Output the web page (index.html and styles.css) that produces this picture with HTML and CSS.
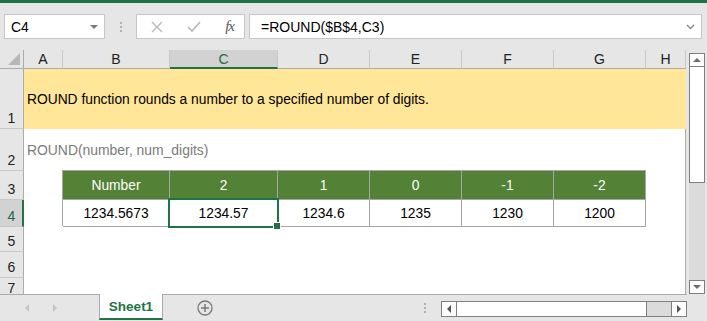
FILE: index.html
```html
<!DOCTYPE html>
<html lang="en">
<head>
    <meta charset="UTF-8">
    <title>ROUND function</title>
    <link rel="stylesheet" href="styles.css">
</head>
<body>
    <div class="app-edge"></div>

    <div class="formula-bar">
        <div class="name-box">
            <span>C4</span>
            <span class="caret-down"></span>
        </div>
        <div class="grip"><i></i><i></i><i></i></div>
        <div class="fx-box">
            <svg width="12" height="12" viewBox="0 0 12 12"><path d="M1 1 L11 11 M11 1 L1 11" stroke="#b8b8b8" stroke-width="1.4" fill="none"/></svg>
            <svg width="14" height="12" viewBox="0 0 14 12"><path d="M1 6 L5 10 L13 1" stroke="#b8b8b8" stroke-width="1.6" fill="none"/></svg>
            <span class="fx">fx</span>
        </div>
        <div class="formula-input">
            <span>=ROUND($B$4,C3)</span>
            <svg width="9" height="6" viewBox="0 0 9 6"><path d="M1 1 L4.5 4.5 L8 1" stroke="#8a8a8a" stroke-width="1.4" fill="none"/></svg>
        </div>
    </div>

    <div class="workspace">
        <div class="sheet">
            <!-- column headers -->
            <div class="corner"><span class="corner-tri"></span></div>
            <div class="col-head">A</div>
            <div class="col-head">B</div>
            <div class="col-head selected">C</div>
            <div class="col-head">D</div>
            <div class="col-head">E</div>
            <div class="col-head">F</div>
            <div class="col-head">G</div>
            <div class="col-head">H</div>

            <!-- row 1 -->
            <div class="row-head">1</div>
            <div class="banner">ROUND function rounds a number to a specified number of digits.</div>

            <!-- row 2 -->
            <div class="row-head">2</div>
            <div class="syntax">ROUND(number, num_digits)</div>

            <!-- rows 3-4 -->
            <div class="row-head">3</div>
            <div class="row-head selected r4">4</div>
            <div class="blank-a"></div>
            <div class="blank-h"></div>
            <div class="data-table">
                <div class="th">Number</div>
                <div class="th">2</div>
                <div class="th">1</div>
                <div class="th">0</div>
                <div class="th">-1</div>
                <div class="th">-2</div>
                <div class="td">1234.5673</div>
                <div class="td active">1234.57</div>
                <div class="td">1234.6</div>
                <div class="td">1235</div>
                <div class="td">1230</div>
                <div class="td">1200</div>
            </div>

            <!-- rows 5-7 -->
            <div class="row-head">5</div>
            <div class="row-head">6</div>
            <div class="row-head cut">7</div>
            <div class="blank-rest"></div>
        </div>

        <div class="vscroll">
            <div class="sb-btn"><span class="tri-up"></span></div>
            <div class="sb-thumb-v"></div>
            <div class="sb-track-v"></div>
            <div class="sb-btn"><span class="tri-down"></span></div>
        </div>
    </div>

    <div class="tab-bar">
        <div class="tab-nav">
            <span class="tri-left"></span>
            <span class="tri-right"></span>
        </div>
        <div class="sheet-tab">Sheet1</div>
        <div class="add-sheet">
            <svg width="16" height="16" viewBox="0 0 16 16">
                <circle cx="8" cy="8" r="7" stroke="#7a7a7a" stroke-width="1.3" fill="none"/>
                <path d="M8 4 V12 M4 8 H12" stroke="#7a7a7a" stroke-width="1.5"/>
            </svg>
        </div>
        <div class="tab-spacer"></div>
        <div class="grip h-grip"><i></i><i></i><i></i></div>
        <div class="hscroll">
            <div class="sb-btn-h"><span class="tri-left dark"></span></div>
            <div class="sb-thumb-h"></div>
            <div class="sb-track-h"></div>
            <div class="sb-btn-h"><span class="tri-right dark"></span></div>
        </div>
    </div>
</body>
</html>
```

FILE: styles.css
```css
/* Base */
* {
    margin: 0;
    padding: 0;
    box-sizing: border-box;
}

body {
    width: 707px;
    height: 321px;
    overflow: hidden;
    font-family: "Liberation Sans", Arial, sans-serif;
    font-size: 13px;
    color: #000;
    background-color: #e6e6e6;
}

.app-edge {
    height: 3px;
    background-color: #217346;
}

/* Formula bar */
.formula-bar {
    display: flex;
    height: 47px;
    padding: 11px 5px 0 4px;
}

.name-box,
.fx-box,
.formula-input {
    height: 25px;
    background-color: #fff;
    border: 1px solid #c6c6c6;
    display: flex;
    align-items: center;
}

.name-box {
    width: 101px;
    padding: 0 6px;
    justify-content: space-between;
    font-size: 14px;
}

.caret-down {
    width: 0;
    height: 0;
    border-left: 4px solid transparent;
    border-right: 4px solid transparent;
    border-top: 4px solid #7a7a7a;
    margin-top: 1px;
}

.grip {
    width: 31px;
    display: flex;
    flex-direction: column;
    align-items: center;
    justify-content: center;
    gap: 2px;
    height: 25px;
}

.grip i {
    display: block;
    width: 2px;
    height: 2px;
    background-color: #b0b0b0;
}

.fx-box {
    width: 109px;
    padding: 0 10px 0 14px;
    justify-content: space-between;
}

.fx {
    font-family: "Liberation Serif", "Times New Roman", serif;
    font-style: italic;
    font-size: 15px;
    color: #555;
    letter-spacing: -1px;
}

.formula-input {
    flex: 1;
    margin-left: 4px;
    padding: 0 6px 0 11px;
    justify-content: space-between;
    font-size: 14px;
}

/* Sheet area */
.workspace {
    display: flex;
    height: 244px;
}

.sheet {
    width: 686px;
    display: grid;
    grid-template-columns: 24px 39px 107px 108px 92px 92px 92px 92px 40px;
    grid-template-rows: 19px 60px 42px 29px 27px 25px 26px 16px;
    border-right: 1px solid #ababab;
    background-color: #fff;
}

.corner {
    background-color: #e6e6e6;
    border-right: 1px solid #ababab;
    border-bottom: 1px solid #ababab;
    position: relative;
}

.corner-tri {
    position: absolute;
    right: 3px;
    bottom: 3px;
    width: 0;
    height: 0;
    border-left: 12px solid transparent;
    border-bottom: 12px solid #b7b7b7;
}

.col-head {
    background-color: #e6e6e6;
    border-right: 1px solid #c8c8c8;
    border-bottom: 1px solid #ababab;
    display: flex;
    align-items: center;
    justify-content: center;
    font-size: 14px;
    color: #222;
}

.col-head:last-child {
    border-right: none;
}

.col-head.selected {
    background-color: #d2d2d2;
    color: #1e6b43;
    border-bottom: 2px solid #217346;
}

.row-head {
    grid-column: 1;
    background-color: #e6e6e6;
    border-right: 1px solid #ababab;
    border-bottom: 1px solid #c8c8c8;
    display: flex;
    align-items: flex-end;
    justify-content: center;
    padding-bottom: 2px;
    font-size: 14px;
    color: #222;
}

.row-head.selected {
    background-color: #d2d2d2;
    color: #1e6b43;
    border-right: 2px solid #217346;
    padding-left: 1px;
}

.row-head.cut {
    align-items: flex-start;
    padding-top: 2px;
    border-bottom: none;
}

.banner {
    grid-column: 2 / 10;
    background-color: #ffe699;
    display: flex;
    align-items: center;
    padding-left: 3px;
    font-size: 13.8px;
}

.syntax {
    grid-column: 2 / 10;
    display: flex;
    align-items: center;
    padding-left: 3px;
    font-size: 13.9px;
    color: #7b7b7b;
}

.blank-a {
    grid-column: 2;
    grid-row: 4 / 6;
}

.blank-h {
    grid-column: 9;
    grid-row: 4 / 6;
}

.blank-rest {
    grid-column: 2 / 10;
    grid-row: 6 / 9;
}

/* Example table B3:G4 */
.data-table {
    grid-column: 3 / 9;
    grid-row: 4 / 6;
    display: grid;
    grid-template-columns: 107px 108px 92px 92px 92px 92px;
    grid-template-rows: 29px 27px;
    margin-left: -1px;
    margin-top: -1px;
    margin-bottom: 1px;
    border-left: 1px solid #a6a6a6;
    border-top: 1px solid #a6a6a6;
}

.th,
.td {
    display: flex;
    align-items: center;
    justify-content: center;
    border-right: 1px solid #a6a6a6;
    border-bottom: 1px solid #a6a6a6;
    font-size: 13.8px;
}

.th {
    background-color: #538135;
    color: #fff;
}

.td {
    background-color: #fff;
}

.td.active {
    position: relative;
}

.td.active::after {
    content: "";
    position: absolute;
    top: -2px;
    left: -2px;
    right: -2px;
    bottom: -2px;
    border: 2px solid #217346;
}

.td.active::before {
    content: "";
    position: absolute;
    right: -4px;
    bottom: -4px;
    width: 6px;
    height: 6px;
    background-color: #217346;
    border: 1px solid #fff;
    z-index: 1;
}

/* Vertical scrollbar */
.vscroll {
    width: 21px;
    display: flex;
    flex-direction: column;
    padding: 3px 2px 0 3px;
}

.sb-btn {
    height: 14px;
    background-color: #fff;
    border: 1px solid #7f7f7f;
    display: flex;
    align-items: center;
    justify-content: center;
}

.sb-thumb-v {
    height: 116px;
    background-color: #fff;
    border: 1px solid #7f7f7f;
    border-top: none;
}

.sb-track-v {
    flex: 1;
    background-color: #dbdbdb;
}

.tri-up,
.tri-down {
    width: 0;
    height: 0;
    border-left: 4px solid transparent;
    border-right: 4px solid transparent;
}

.tri-up {
    border-bottom: 4px solid #6d6d6d;
}

.tri-down {
    border-top: 4px solid #6d6d6d;
}

/* Sheet tabs */
.tab-bar {
    height: 27px;
    display: flex;
    border-top: 1px solid #ababab;
    width: 687px;
}

.tab-nav {
    width: 99px;
    display: flex;
    align-items: center;
    padding-left: 25px;
    gap: 24px;
}

.tri-left,
.tri-right {
    width: 0;
    height: 0;
    border-top: 4px solid transparent;
    border-bottom: 4px solid transparent;
}

.tri-left {
    border-right: 4px solid #c4c4c4;
}

.tri-right {
    border-left: 4px solid #c4c4c4;
}

.tri-left.dark {
    border-right-color: #555;
}

.tri-right.dark {
    border-left-color: #555;
}

.sheet-tab {
    width: 64px;
    margin-top: -1px;
    background-color: #fff;
    border-left: 1px solid #ababab;
    border-right: 1px solid #ababab;
    border-bottom: 2px solid #217346;
    height: 26px;
    display: flex;
    align-items: center;
    justify-content: center;
    font-weight: bold;
    font-size: 13.5px;
    color: #217346;
}

.add-sheet {
    width: 84px;
    display: flex;
    align-items: center;
    justify-content: center;
}

.tab-spacer {
    flex: 1;
}

.h-grip {
    width: 10px;
    height: 26px;
    margin-right: 11px;
}

.hscroll {
    width: 246px;
    height: 16px;
    margin-top: 6px;
    display: flex;
    border: 1px solid #7f7f7f;
    background-color: #fff;
}

.sb-btn-h {
    width: 15px;
    display: flex;
    align-items: center;
    justify-content: center;
    border-right: 1px solid #7f7f7f;
}

.sb-btn-h:last-child {
    border-right: none;
    border-left: 1px solid #7f7f7f;
}

.sb-thumb-h {
    width: 189px;
}

.sb-track-h {
    flex: 1;
    background-color: #dbdbdb;
    border-left: 1px solid #7f7f7f;
}
```
